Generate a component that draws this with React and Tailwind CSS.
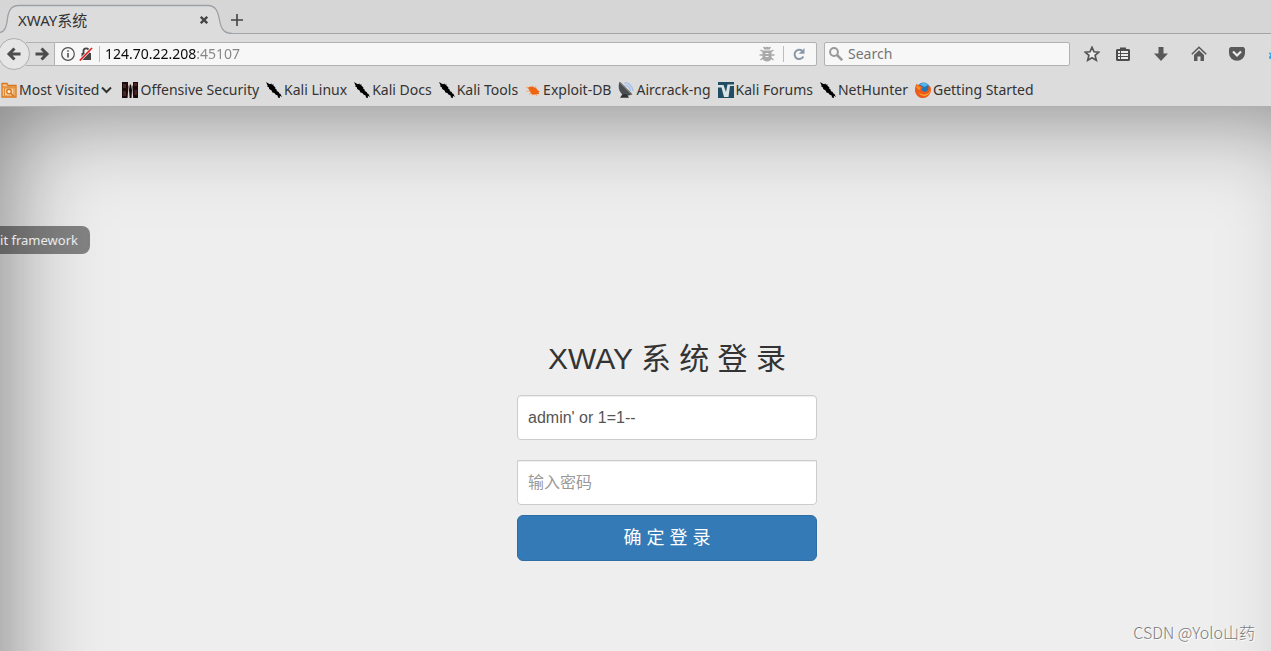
import React from "react";

const CHROME = "font-['Noto_Sans','Noto_Sans_CJK_SC',sans-serif]";
const PAGE = "font-['Liberation_Sans','Noto_Sans_CJK_SC',sans-serif]";

function ArrowIcon({ flip }) {
  return (
    <svg viewBox="0 0 16 16" className="size-4" fill="none" stroke="#4c4c4c" strokeWidth="3">
      <path d={flip ? "M1.5 8H12M7.5 2.5L13 8l-5.5 5.5" : "M14.5 8H4M8.5 2.5L3 8l5.5 5.5"} />
    </svg>
  );
}

function FolderIcon() {
  return (
    <svg viewBox="0 0 16 16" className="size-4 shrink-0" fill="none">
      <path d="M1 15V1.500h5l1 2h8V15z" fill="#f5c48e" stroke="#d9761b" strokeWidth="1.300" />
      <path d="M1.500 5h13" stroke="#d9761b" />
      <rect x="3.500" y="6" width="9.500" height="8" fill="#f8d3a6" stroke="#e08a35" />
      <circle cx="8" cy="9.500" r="2.300" fill="#fff3e4" stroke="#d9761b" strokeWidth="1.400" />
      <path d="M9.800 11.200l3 3" stroke="#d9761b" strokeWidth="1.600" />
    </svg>
  );
}

function OffsecIcon() {
  return (
    <svg viewBox="0 0 16 16" className="size-4 shrink-0">
      <path d="M0 0h16v16H0z" fill="#1a0c0c" />
      <path d="M1 2h3v4H1zM12 1h3v3h-3zM12.500 8H15v5h-2.500zM1 9h3v5H1z" fill="#4b2322" />
      <path d="M6 0h5v3l-.6 1.500.8 11.500H5.500l1-11.500L6 3z" fill="#ddd6d3" />
      <path d="M7.800 2.500h1.200l1 5.500-.5 8H7.700l-.7-8z" fill="#120a0a" />
    </svg>
  );
}

function KaliIcon() {
  return (
    <svg viewBox="0 0 16 16" className="size-4 shrink-0" fill="#000">
      <path d="M0 0l2.500 1.500L4 2.200 5.500 1.500l.4 1.300 1.600-.6-.2 1.400L9.500 5.500 9 6.300l2 1.700-.4 1 2.200 1 .2 1.200 1.300.6 1.700 3.200-2.200-1.200L14 16l-2-.6-.4-1.900-2.200-1-1-1.500-2-.6-.8-2L3.200 7 2.800 5.200 1 4.200 1.600 3.500z" />
    </svg>
  );
}

function ExploitIcon() {
  return (
    <svg viewBox="0 0 16 16" className="size-4 shrink-0">
      <path d="M1 5l3 1.500M1.500 9.500l3-.5M4 12.500l2.500-1.500M7 3.500l1.500 2M11 4l-.5 2M12 14l-1-2M7.500 13.500l.5-2" stroke="#f3a36f" fill="none" />
      <path d="M3 5.500L5.500 4.500l3 .5 3 1.500 1.500 2 1.800 1-1.300.8.700 2-2.200-.4-2.500.9-3-.8L5 9.500l-1-1.800z" fill="#ef640f" />
    </svg>
  );
}

function DishIcon() {
  return (
    <svg viewBox="0 0 16 16" className="size-4 shrink-0" fill="none">
      <path d="M6.500 1.200C11 .5 14.500 4 15 9M6.500 3.500c3.500 0 5.800 2 6 5.500" stroke="#a9c0ea" strokeWidth="1.500" />
      <path d="M1.500 0C0 4 .5 9.500 4.500 12.500 7 14 11 14 14 12.500z" fill="#4a4e50" />
      <path d="M1.500 0L14 12.500" stroke="#75797b" strokeWidth="1.300" />
      <path d="M4.500 12l-2.500 3.700h9L9 12.500z" fill="#2f3234" />
    </svg>
  );
}

function ForumsIcon() {
  return (
    <svg viewBox="0 0 16 16" className="size-4 shrink-0">
      <path d="M0 0h16v16H0z" fill="#214d63" />
      <path d="M0 3h5.500L8 10l1.500-7.500H16V4h-4L10.500 15H6L3.500 5.500H0z" fill="#d9e2e4" />
    </svg>
  );
}

function FirefoxIcon() {
  return (
    <svg viewBox="0 0 16 16" className="size-4 shrink-0">
      <circle cx="8.500" cy="7" r="6.500" fill="#1f77b8" />
      <path d="M5 2.500C7 .5 11 .5 13 3L9.500 5z" fill="#59b5e8" />
      <path d="M1 3l1-1.500.7 1.700C4 2.800 5.500 3.300 6.500 4.800L8 5.500 6.500 7c.5 3 4 3.500 6 1.500 1-1.200 1-3 .5-4.500l1.500 1.200c.2-.8 0-1.500-.3-2.200C16 5 16.500 8 15.500 10.500 14 14.300 11 16 8 16c-4.500 0-8-3.500-8-7.800C0 6.200.2 4.500 1 3z" fill="#ec5a1c" />
      <path d="M15.500 5c.5 4-2 7.500-6 7.800-2.500.2-4.500-1-5.500-3 .5 3.200 4 4.700 7 3.700 3.500-1.200 5.300-5 4.500-8.500z" fill="#fbbd2a" />
      <path d="M1.200 4.500l1-1.500.7 1.300c1 0 2 .5 2.800 1.500L4.500 8c-1 0-2.500-1.500-3.300-3.500z" fill="#f79122" />
    </svg>
  );
}

const bookmarks = [
  ["Offensive Security", OffsecIcon],
  ["Kali Linux", KaliIcon],
  ["Kali Docs", KaliIcon],
  ["Kali Tools", KaliIcon],
  ["Exploit-DB", ExploitIcon],
  ["Aircrack-ng", DishIcon],
  ["Kali Forums", ForumsIcon],
  ["NetHunter", KaliIcon],
  ["Getting Started", FirefoxIcon],
];

function TabStrip() {
  return (
    <div className="flex h-[34px] items-stretch bg-[#d6d6d6]">
      <div className="relative flex w-[232px] shrink-0 items-center pt-[6px]">
        <svg viewBox="0 0 232 34" className="absolute inset-0 h-[34px] w-[232px]" fill="#dcdcdc">
          <path d="M0 34v-1c5-1 6-5 7-11C8 12 10 5.500 19 5.500H208C216 5.500 218 12 219.500 20 221 28 223 33.500 232 33.500v.5z" />
          <path d="M0 32.500c5-1 6-5 7-10.500C8 12 10 5.500 19 5.500H208C216 5.500 218 12 219.500 20 221 28 223 33.500 232 33.500" fill="none" stroke="#9aa0a6" strokeWidth="1.300" />
        </svg>
        <span className="relative flex-1 pl-[18px] text-[15px] leading-5">XWAY系统</span>
        <button aria-label="Close tab" className="relative mr-6 size-2">
          <svg viewBox="0 0 8 8" className="size-2" fill="none" stroke="#444" strokeWidth="2.300">
            <path d="M.8.8l6.400 6.400M7.200.8L.8 7.200" />
          </svg>
        </button>
      </div>
      <div className="flex flex-1 items-center border-b border-[#a3a5a8] pt-[6px]">
        <button aria-label="New tab" className="-ml-2 px-[6px]">
          <svg viewBox="0 0 14 14" className="size-[14px]" fill="none" stroke="#444" strokeWidth="1.600">
            <path d="M7 1v12M1 7h12" />
          </svg>
        </button>
      </div>
    </div>
  );
}

function AddressBar() {
  return (
    <div className="flex h-6 min-w-0 flex-1 items-center border border-[#b1b1b1] bg-[#f7f7f7] pl-[6px] pr-[10px] rounded-r-xs">
      <button aria-label="Site information">
        <svg viewBox="0 0 14 14" className="size-[14px]" fill="none" stroke="#505050">
          <circle cx="7" cy="7" r="6.300" strokeWidth="1.200" />
          <path d="M7 6v4.500M7 3.300v1.500" strokeWidth="1.600" />
        </svg>
      </button>
      <svg viewBox="0 0 14 14" className="ml-1 size-[14px] shrink-0" fill="none">
        <path d="M4.500 6V4a2.700 2.700 0 0 1 5.400 0v2" stroke="#444" strokeWidth="1.800" />
        <path d="M2.500 6h9.500v7H2.500z" fill="#444" />
        <path d="M.8 13.500L13 1" stroke="#f7f7f7" strokeWidth="3" />
        <path d="M.8 13.500L13 1" stroke="#e02020" strokeWidth="1.700" />
      </svg>
      <span className="ml-[6px] h-4 w-px bg-[#bdbdbd]" />
      <input
        aria-label="Address"
        defaultValue="124.70.22.208:45107"
        className="ml-[5px] min-w-0 flex-1 bg-[linear-gradient(to_right,#0a0a0a_92px,#858585_92px)] bg-clip-text text-sm text-transparent outline-none"
      />
      <button aria-label="Debugger">
        <svg viewBox="0 0 16 16" className="size-4" fill="#a9a9a9">
          <path d="M5 3.500C5 1.800 6.300.8 8 .8s3 1 3 2.700z" />
          <path d="M3.500 4.500h9v7.500c0 2-2.200 3.500-4.500 3.500s-4.500-1.500-4.500-3.500z" />
          <path d="M4.500 1L6 2.800M11.500 1L10 2.800M4.500 6L1.500 4M11.500 6l3-2M4 9H.5M12 9h3.500M4.500 11.500l-3 2.500M11.500 11.500l3 2.500" stroke="#a9a9a9" strokeWidth="1.500" />
          <path d="M6.500 7.500h3M6.500 10.500h3" stroke="#f7f7f7" strokeWidth="1.200" />
        </svg>
      </button>
      <span className="mx-2 h-4 w-px bg-[#bdbdbd]" />
      <button aria-label="Reload">
        <svg viewBox="0 0 14 14" className="size-[14px]" fill="none">
          <path d="M11.300 9.500A4.600 4.600 0 1 1 10.300 4" stroke="#8a99a8" strokeWidth="2" />
          <path d="M12.500 1v5.800H6.700z" fill="#8a99a8" />
        </svg>
      </button>
    </div>
  );
}

function ToolbarIcons() {
  return (
    <div className="flex w-[201px] shrink-0 items-center overflow-hidden pl-[14px]">
      <button aria-label="Bookmark this page">
        <svg viewBox="0 0 16 16" className="size-4" fill="#ececec" stroke="#555" strokeWidth="1.700">
          <path d="M8 1.300l2 4.500 4.800.4-3.700 3.200 1.200 4.800L8 11.700l-4.300 2.500 1.200-4.800L1.200 6.200 6 5.800z" />
        </svg>
      </button>
      <span className="ml-[7px] h-5 w-px bg-[#bdbdbd]" />
      <button aria-label="Show bookmarks" className="ml-2">
        <svg viewBox="0 0 16 16" className="size-4">
          <path d="M2 3h3V1.500h6V3h3l1 1v10l-1 1H2l-1-1V4z" fill="#4d4d4d" />
          <path d="M3 6h2M6 6h7M3 9h2M6 9h7M3 12h2M6 12h7" stroke="#ececec" strokeWidth="1.800" />
        </svg>
      </button>
      <button aria-label="Downloads" className="ml-[22px]">
        <svg viewBox="0 0 16 16" className="size-4" fill="#595959">
          <path d="M5.500 1h5v6.500H15L8 15 1 7.500h4.500z" />
        </svg>
      </button>
      <button aria-label="Home" className="ml-[22px]">
        <svg viewBox="0 0 16 16" className="size-4" fill="#595959">
          <path d="M.8 8.300L8 1.300l7.200 7" fill="none" stroke="#595959" strokeWidth="1.600" />
          <path d="M3 9l5-4.800L13 9v6H9.500v-4.500h-3V15H3z" />
        </svg>
      </button>
      <button aria-label="Save to Pocket" className="ml-[22px]">
        <svg viewBox="0 0 16 16" className="size-4">
          <path d="M1.500 1h13L16 2.500V7a8 7.800 0 0 1-16 0V2.500z" fill="#595959" />
          <path d="M4 5.500l4 4 4-4" fill="none" stroke="#ececec" strokeWidth="2.200" />
        </svg>
      </button>
      <button aria-label="Extensions" className="ml-6 shrink-0">
        <svg viewBox="0 0 16 16" className="size-4" fill="none" stroke="#3fa2ee" strokeWidth="1.600">
          <path d="M3 5L1 13M0 7.500h8M0 11h7" />
        </svg>
      </button>
    </div>
  );
}

function NavBar() {
  return (
    <div className="flex h-10 items-center">
      <button
        aria-label="Back"
        className="relative -ml-[2px] flex size-8 shrink-0 items-center justify-center rounded-full border border-[#adadad] bg-[#e6e6e6]"
      >
        <ArrowIcon />
      </button>
      <button
        aria-label="Forward"
        className="-ml-1 flex h-6 w-7 shrink-0 items-center justify-center border-y border-[#b1b1b1] pl-1"
      >
        <ArrowIcon flip />
      </button>
      <AddressBar />
      <label className="ml-[7px] flex h-6 w-[246px] shrink-0 items-center rounded-xs border border-[#b1b1b1] bg-[#f7f7f7] pl-1">
        <svg viewBox="0 0 14 14" className="size-[14px]" fill="none" stroke="#999">
          <circle cx="5" cy="5" r="3.900" strokeWidth="2" />
          <path d="M8 8l5.200 5.200" strokeWidth="2.500" />
        </svg>
        <input
          aria-label="Search"
          placeholder="Search"
          className="ml-[5px] min-w-0 flex-1 text-sm outline-none placeholder:text-[#757575]"
        />
      </label>
      <ToolbarIcons />
    </div>
  );
}

function BookmarksBar() {
  return (
    <nav className="flex h-8 items-center gap-[7px] pl-px text-sm whitespace-nowrap">
      <button className="mr-[3px] flex items-center gap-[2px]">
        <FolderIcon />
        Most Visited
        <svg viewBox="0 0 11 8" className="h-2 w-[11px]" fill="none" stroke="#333" strokeWidth="2">
          <path d="M1 1.500l4.500 4.500L10 1.500" />
        </svg>
      </button>
      {bookmarks.map(([name, Icon]) => (
        <a key={name} href="#" className="flex items-center gap-[2px]">
          <Icon />
          {name}
        </a>
      ))}
    </nav>
  );
}

function LoginPage() {
  return (
    <main className={`relative flex-1 overflow-hidden bg-[#eee] ${PAGE}`}>
      <div className="-mr-[63px] flex min-h-[800px] flex-col items-center pt-[233px] shadow-[inset_0_0_100px_rgba(0,0,0,0.5)]">
        <form className="flex w-[300px] flex-col" onSubmit={(e) => e.preventDefault()}>
          <h1 className="mb-[17px] text-center text-3xl leading-[38px] whitespace-nowrap text-[#333]">
            XWAY 系 统 登 录
          </h1>
          <input
            aria-label="用户名"
            defaultValue="admin' or 1=1--"
            className="mb-5 h-[45px] rounded-sm border border-[#ccc] bg-white px-[10px] text-base text-[#555] shadow-[inset_0_1px_1px_rgba(0,0,0,0.075)] outline-none"
          />
          <input
            type="password"
            aria-label="密码"
            placeholder="输入密码"
            className="mb-[10px] h-[45px] rounded-b-sm border border-[#ccc] bg-white px-[10px] text-base text-[#555] shadow-[inset_0_1px_1px_rgba(0,0,0,0.075)] outline-none placeholder:text-[#999]"
          />
          <button className="h-[46px] rounded-md border border-[#2e6da4] bg-[#337ab7] text-lg text-white">
            确 定 登 录
          </button>
        </form>
      </div>
      <div className={`absolute top-[119px] left-0 flex h-7 w-[90px] justify-end rounded-r-lg bg-black/45 pr-3 text-[13px] leading-7 whitespace-nowrap text-white/85 ${CHROME}`}>
        it framework
      </div>
      <div className="absolute right-4 bottom-[7px] font-['Noto_Sans_CJK_SC',sans-serif] text-base font-light text-[#7c7c7c] [text-shadow:1px_1px_0_#fff]">
        CSDN @Yolo山药
      </div>
    </main>
  );
}

export default function App() {
  return (
    <div className={`flex h-screen flex-col overflow-hidden text-[#333] ${CHROME}`}>
      <header className="border-b border-[#b0b0b0] bg-[#dcdcdc]">
        <TabStrip />
        <NavBar />
        <BookmarksBar />
      </header>
      <LoginPage />
    </div>
  );
}
